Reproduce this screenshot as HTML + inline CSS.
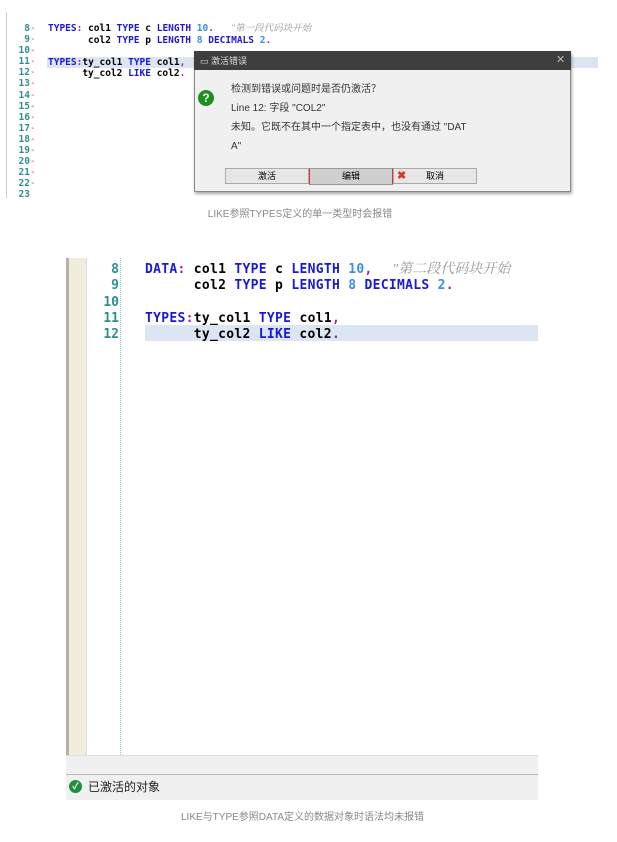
<!DOCTYPE html>
<html><head><meta charset="utf-8"><style>
*{margin:0;padding:0;box-sizing:border-box}
body{width:617px;height:842px;background:#fff;position:relative;overflow:hidden;font-family:"Liberation Sans","Noto Sans CJK SC",sans-serif}
.a{position:absolute;white-space:pre}
.m{font-family:"DejaVu Sans Mono","Liberation Mono",monospace;font-weight:bold}
.k{color:#1a1ad6}.n{color:#3b8fe0}.p{color:#a020a0}.c{color:#999;font-style:italic;font-family:"Liberation Serif","Noto Serif CJK SC",serif;font-weight:normal}
.ln{color:#2f8f8f;text-align:right}
.s1{font-size:9.5px;line-height:11.1px}
.s2{font-size:13px;line-height:16.3px;letter-spacing:0.3px}
.cap{color:#888;font-size:10px;text-align:center}
</style></head><body>
<div class="a" style="left:6px;top:12px;width:1px;height:186px;background:#ccc"></div>
<div class="a" style="left:47px;top:57px;width:551px;height:11px;background:#dce6f2"></div>
<div class="a m s1 ln" style="left:8px;top:23px;width:22px">8
9
10
11
12
13
14
15
16
17
18
19
20
21
22
23</div>
<div class="a m s1" style="left:31px;top:23px;color:#f3a0a0;font-size:7px;line-height:11.1px">▸
▸
▸
▸
▸
▸
▸
▸
▸
▸
▸
▸
▸
▸
▸</div>
<div class="a m s1" style="left:48px;top:23px"><span class="k">TYPES</span><span class="p">:</span> col1 <span class="k">TYPE</span> c <span class="k">LENGTH</span> <span class="n">10</span><span class="p">.</span>   <span class="c">"第一段代码块开始</span>
       col2 <span class="k">TYPE</span> p <span class="k">LENGTH</span> <span class="n">8</span> <span class="k">DECIMALS</span> <span class="n">2</span><span class="p">.</span>

<span class="k">TYPES</span><span class="p">:</span>ty_col1 <span class="k">TYPE</span> col1<span class="p">,</span>
      ty_col2 <span class="k">LIKE</span> col2<span class="p">.</span></div>
<div class="a" style="left:194px;top:51px;width:377px;height:141px;background:#f0f0f0;border:1px solid #888;box-shadow:1px 2px 3px rgba(0,0,0,.35)"></div>
<div class="a" style="left:194px;top:51px;width:377px;height:19px;background:#3e3e3e"></div>
<div class="a" style="left:200px;top:54px;color:#ddd;font-size:9px">▭ 激活错误</div>
<div class="a" style="left:556px;top:53px;color:#bbb;font-size:11px">✕</div>
<div class="a" style="left:198px;top:90px;width:16px;height:16px;border-radius:50%;background:#1f8f1f;color:#fff;font-weight:bold;font-size:12px;text-align:center;line-height:16px">?</div>
<div class="a" style="left:231px;top:80px;font-size:10px;line-height:19px;color:#333">检测到错误或问题时是否仍激活？
Line 12: 字段 "COL2"
未知。它既不在其中一个指定表中，也没有通过 "DAT
A"</div>
<div class="a" style="left:225px;top:168px;width:84px;height:16px;background:#e6e6e6;border:1px solid #aaa;font-size:9px;text-align:center;line-height:14px">激活</div>
<div class="a" style="left:309px;top:168px;width:84px;height:17px;background:#cfcfcf;border:1px solid #999;border-left-color:#d33;border-right-color:#d33;font-size:9px;text-align:center;line-height:15px">编辑</div>
<div class="a" style="left:393px;top:168px;width:84px;height:16px;background:#e6e6e6;border:1px solid #aaa;font-size:9px;text-align:center;line-height:14px">取消</div>
<div class="a" style="left:397px;top:169px;color:#d04020;font-size:11px;font-weight:bold">✖</div>
<div class="a cap" style="left:0;top:205px;width:600px">LIKE参照TYPES定义的单一类型时会报错</div>
<div class="a" style="left:66px;top:258px;width:3px;height:497px;background:#b8b2a4"></div>
<div class="a" style="left:69px;top:258px;width:18px;height:497px;background:#f2ecdc;border-right:1px solid #ddd"></div>
<div class="a" style="left:120px;top:258px;width:0;height:497px;border-left:1px dotted #8cc"></div>
<div class="a" style="left:145px;top:325px;width:393px;height:16px;background:#dce6f2"></div>
<div class="a m s2 ln" style="left:90px;top:262px;width:29px;letter-spacing:0">8
9
10
11
12</div>
<div class="a m s2" style="left:145px;top:262px"><span class="k">DATA</span><span class="p">:</span> col1 <span class="k">TYPE</span> c <span class="k">LENGTH</span> <span class="n">10</span><span class="p">,</span>  <span class="c" style="font-size:14px;letter-spacing:0"> "第二段代码块开始</span>
      col2 <span class="k">TYPE</span> p <span class="k">LENGTH</span> <span class="n">8</span> <span class="k">DECIMALS</span> <span class="n">2</span><span class="p">.</span>

<span class="k">TYPES</span><span class="p">:</span>ty_col1 <span class="k">TYPE</span> col1<span class="p">,</span>
      ty_col2 <span class="k">LIKE</span> col2<span class="p">.</span></div>
<div class="a" style="left:66px;top:755px;width:472px;height:19px;background:#f0f0f0;border-top:1px solid #ddd"></div>
<div class="a" style="left:66px;top:774px;width:472px;height:26px;background:#f0f0f0;border-top:1px solid #bbb"></div>
<div class="a" style="left:69px;top:780px;width:13px;height:13px;border-radius:50%;background:#1f8f3a;color:#fff;font-size:9px;text-align:center;line-height:13px;font-weight:bold">✓</div>
<div class="a" style="left:88px;top:778px;font-size:12px;color:#222">已激活的对象</div>
<div class="a cap" style="left:0;top:808px;width:605px">LIKE与TYPE参照DATA定义的数据对象时语法均未报错</div>
</body></html>
